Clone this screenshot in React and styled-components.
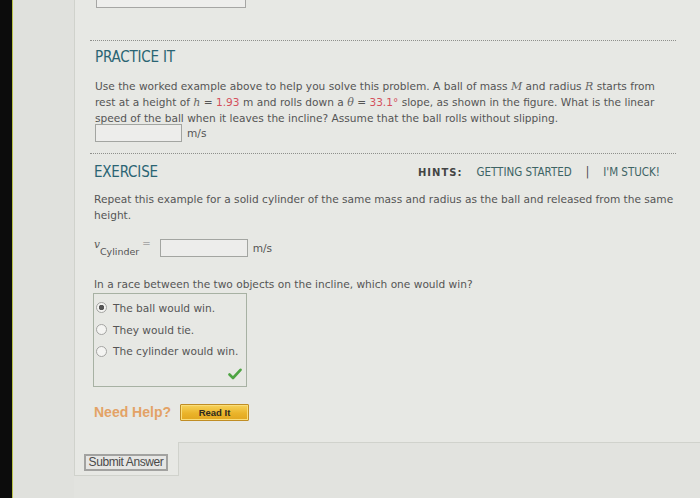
import React from 'react';
import styled, { createGlobalStyle } from 'styled-components';

const GlobalStyle = createGlobalStyle`
  html, body {
    margin: 0;
    padding: 0;
    background: #e2e3df;
  }
  body {
    font-family: "DejaVu Sans", Verdana, sans-serif;
    color: #555;
  }
`;

const Page = styled.div`
  display: flex;
  align-items: flex-start;
  width: 700px;
  height: 498px;
  overflow: hidden;
  background: #e2e3df;
`;

const Bezel = styled.div`
  width: 12px;
  height: 498px;
  background: #0c0c0c;
  border-right: 1px solid #b9c24a;
  flex-shrink: 0;
`;

const Gutter = styled.div`
  width: 61px;
  height: 498px;
  flex-shrink: 0;
  background: #e0e1dd;
`;

const Panel = styled.div`
  flex: 1;
  display: flex;
  flex-direction: column;
  border-left: 1px solid #d0d2cc;
  background: #e7e8e4;
`;

const Content = styled.div`
  padding: 0 24px 0 15px;
  display: flex;
  flex-direction: column;
`;

const TopStub = styled.div`
  width: 150px;
  height: 8px;
  margin-left: 6px;
  background: #eeeeec;
  border: 1px solid #a6a6a4;
  border-top: none;
  box-sizing: border-box;
`;

const Divider = styled.div`
  border-top: 1px dotted #8e8f8b;
  margin-top: ${p => p.$top}px;
`;

const Section = styled.div`
  padding-left: ${p => p.$indent || 0}px;
  display: flex;
  flex-direction: column;
`;

const Heading = styled.div`
  font-family: "DejaVu Sans Condensed", "DejaVu Sans", sans-serif;
  font-stretch: condensed;
  font-size: 15px;
  line-height: 18px;
  color: #2a6473;
  letter-spacing: -0.2px;
  margin-top: ${p => p.$top || 0}px;
`;

const Para = styled.p`
  margin: ${p => p.$top || 0}px 0 0 0;
  font-size: 10.6px;
  line-height: ${p => p.$lh || 16}px;
  color: #555;
`;

const MathVar = styled.span`
  font-family: "DejaVu Serif", "Liberation Serif", serif;
  font-style: italic;
  font-size: 11px;
  line-height: 1;
  color: #666;
`;

const Red = styled.span`
  color: #d4505c;
`;

const AnswerRow = styled.div`
  display: flex;
  align-items: center;
  gap: 5px;
  margin-top: ${p => p.$top || 0}px;
  font-size: 10.6px;
  color: #555;
`;

const AnswerBox = styled.div`
  width: ${p => p.$w}px;
  height: 18px;
  box-sizing: border-box;
  border: 1px solid #a3a5a1;
  background: #ededeb;
`;

const HeaderRow = styled.div`
  display: flex;
  align-items: center;
  justify-content: space-between;
  margin-top: 9px;
  padding-right: 16px;
`;

const Hints = styled.div`
  display: flex;
  align-items: center;
  font-family: "DejaVu Sans Condensed", "DejaVu Sans", sans-serif;
  font-stretch: condensed;
  font-size: 11.5px;
  color: #3e6464;
`;

const HintLabel = styled.span`
  font-family: "DejaVu Sans", sans-serif;
  font-stretch: normal;
  font-weight: bold;
  font-size: 10px;
  letter-spacing: 1px;
  color: #444;
  margin-right: 14px;
`;

const Sep = styled.span`
  margin: 0 14px;
  color: #444;
`;

const VLabel = styled.span`
  display: flex;
  align-items: flex-start;
  height: 20px;
  margin-right: 2px;
`;

const VLetter = styled.span`
  font-family: "DejaVu Serif", serif;
  font-style: italic;
  font-size: 10.5px;
  color: #555;
  line-height: 12px;
`;

const VSub = styled.span`
  font-size: 9.5px;
  line-height: 12px;
  color: #555;
  margin-top: 8px;
`;

const Eq = styled.span`
  font-size: 10px;
  color: #aaa;
  margin: 0 2px 0 3px;
  line-height: 12px;
`;

const ChoiceBox = styled.div`
  width: 154px;
  height: 94px;
  box-sizing: border-box;
  margin-top: 1px;
  margin-left: -1px;
  border: 1px solid #a7b1a3;
  padding: 3px 4px 0 2px;
  display: flex;
  flex-direction: column;
`;

const Choice = styled.label`
  display: flex;
  align-items: center;
  gap: 6px;
  height: 22px;
  font-size: 10.6px;
  color: #555;
`;

const Radio = styled.span`
  width: 9px;
  height: 9px;
  border-radius: 50%;
  border: 1px solid #a4a4a2;
  background: ${p => (p.$on ? 'radial-gradient(circle, #555 0 2.5px, #f4f4f2 3px)' : '#f4f4f2')};
  flex-shrink: 0;
`;

const CheckRow = styled.div`
  display: flex;
  justify-content: flex-end;
  align-items: center;
  height: 24px;
`;

const HelpRow = styled.div`
  display: flex;
  align-items: center;
  gap: 9px;
  margin-top: 16px;
  height: 18px;
`;

const HelpText = styled.span`
  font-family: "Liberation Sans", Arial, sans-serif;
  font-weight: bold;
  font-size: 14px;
  color: #e3a266;
`;

const ReadButton = styled.button`
  width: 69px;
  height: 17px;
  padding: 0;
  border: 1px solid #c08d24;
  border-radius: 1px;
  background: linear-gradient(#f7d25a, #eab42a 55%, #e2a61f);
  box-shadow: inset 0 0 0 1px #f9dd7a;
  font-family: "Liberation Sans", Arial, sans-serif;
  font-weight: bold;
  font-size: 9.5px;
  color: #2d2a20;
`;

const Footer = styled.div`
  display: flex;
  margin-top: 21px;
`;

const Tab = styled.div`
  width: 104px;
  height: 34px;
  box-sizing: border-box;
  border-right: 1px solid #d0d2cc;
  border-bottom: 1px solid #d0d2cc;
  padding: 9px 0 0 9px;
`;

const Rest = styled.div`
  flex: 1;
  border-top: 1px solid #d0d2cc;
  background: #e2e3df;
  margin-right: -1px;
`;

const SubmitButton = styled.button`
  width: 84px;
  height: 17px;
  padding: 0;
  border: 2px solid #a2a2a0;
  background: #e6e6e4;
  font-family: "Liberation Sans", Arial, sans-serif;
  font-size: 12px;
  letter-spacing: -0.4px;
  line-height: 12px;
  color: #4a4a4a;
`;

const Check = () => (
  <svg width="14" height="12" viewBox="0 0 14 12">
    <path d="M1.5 6.5 L5 10 L12.5 1.8" fill="none" stroke="#4ea443" strokeWidth="2.6" strokeLinecap="round" strokeLinejoin="round" />
  </svg>
);

export default function App() {
  return (
    <>
      <GlobalStyle />
      <Page>
        <Bezel />
        <Gutter />
        <Panel>
          <Content>
            <TopStub />
            <Divider $top={32} />
            <Section $indent={5}>
              <Heading $top={7}>PRACTICE IT</Heading>
              <Para $top={12}>
                Use the worked example above to help you solve this problem. A ball of mass <MathVar>M</MathVar> and radius <MathVar>R</MathVar> starts from
                rest at a height of <MathVar>h</MathVar> = <Red>1.93</Red> m and rolls down a <MathVar>θ</MathVar> = <Red>33.1°</Red> slope, as shown in the figure. What is the linear
                speed of the ball when it leaves the incline? Assume that the ball rolls without slipping.
              </Para>
              <AnswerRow $top={-2}>
                <AnswerBox $w={87} />
                <span>m/s</span>
              </AnswerRow>
            </Section>
            <Divider $top={11} />
            <Section $indent={4}>
              <HeaderRow>
                <Heading>EXERCISE</Heading>
                <Hints>
                  <HintLabel>HINTS:</HintLabel>
                  <span>GETTING STARTED</span>
                  <Sep>|</Sep>
                  <span>I'M STUCK!</span>
                </Hints>
              </HeaderRow>
              <Para $top={11} $lh={15.5}>
                Repeat this example for a solid cylinder of the same mass and radius as the ball and released from the
                same height.
              </Para>
              <AnswerRow $top={15}>
                <VLabel>
                  <VLetter>v</VLetter>
                  <VSub>Cylinder</VSub>
                  <Eq>=</Eq>
                </VLabel>
                <AnswerBox $w={88} />
                <span>m/s</span>
              </AnswerRow>
              <Para $top={18}>In a race between the two objects on the incline, which one would win?</Para>
              <ChoiceBox>
                <Choice><Radio $on />The ball would win.</Choice>
                <Choice><Radio />They would tie.</Choice>
                <Choice><Radio />The cylinder would win.</Choice>
                <CheckRow><Check /></CheckRow>
              </ChoiceBox>
              <HelpRow>
                <HelpText>Need Help?</HelpText>
                <ReadButton>Read It</ReadButton>
              </HelpRow>
            </Section>
          </Content>
          <Footer>
            <Tab>
              <SubmitButton>Submit Answer</SubmitButton>
            </Tab>
            <Rest />
          </Footer>
        </Panel>
      </Page>
    </>
  );
}
